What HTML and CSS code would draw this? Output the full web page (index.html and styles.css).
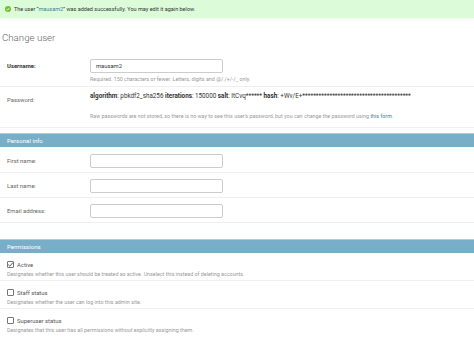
FILE: index.html
```html
<!DOCTYPE html>
<html>
<head>
<meta charset="utf-8">
<link rel="stylesheet" href="styles.css">
</head>
<body>
<div class="msg">
  <svg class="msg-icon" width="6" height="6" viewBox="0 0 12 12"><circle cx="6" cy="6" r="6" fill="#70bf2b"/><path d="M3.2 6.2 L5.2 8.1 L8.8 4.2" stroke="#fff" stroke-width="1.8" fill="none"/></svg>
  <span>The user “<a class="link">mausam2</a>” was added successfully. You may edit it again below.</span>
</div>
<h1 class="title">Change user</h1>
<div class="form">
  <div class="row row-user">
    <div class="label bold">Username:</div>
    <div class="field">
      <div class="input">mausam2</div>
      <div class="help">Required. 150 characters or fewer. Letters, digits and @/./+/-/_ only.</div>
    </div>
  </div>
  <div class="row row-pass">
    <div class="label">Password:</div>
    <div class="field">
      <div class="hashline"><b>algorithm</b>: pbkdf2_sha256 <b>iterations</b>: 150000 <b>salt</b>: ItCvq****** <b>hash</b>: +Wv/E+****************************************</div>
      <div class="help help-pass">Raw passwords are not stored, so there is no way to see this user’s password, but you can change the password using <a class="link">this form</a>.</div>
    </div>
  </div>
  <h2 class="header header-first">Personal info</h2>
  <div class="row row-text first">
    <div class="label">First name:</div>
    <div class="field"><div class="input"></div></div>
  </div>
  <div class="row row-text">
    <div class="label">Last name:</div>
    <div class="field"><div class="input"></div></div>
  </div>
  <div class="row row-text">
    <div class="label">Email address:</div>
    <div class="field"><div class="input"></div></div>
  </div>
  <h2 class="header header-perm">Permissions</h2>
  <div class="row row-check">
    <div class="checkline">
      <span class="box"><svg width="7" height="7" viewBox="0 0 7 7"><path d="M1.2 3.6 L2.8 5.2 L5.9 1.6" stroke="#444" stroke-width="0.9" fill="none"/></svg></span>
      <span class="checklabel">Active</span>
    </div>
    <div class="help">Designates whether this user should be treated as active. Unselect this instead of deleting accounts.</div>
  </div>
  <div class="row row-check">
    <div class="checkline">
      <span class="box"></span>
      <span class="checklabel">Staff status</span>
    </div>
    <div class="help">Designates whether the user can log into this admin site.</div>
  </div>
  <div class="row row-check last">
    <div class="checkline">
      <span class="box"></span>
      <span class="checklabel">Superuser status</span>
    </div>
    <div class="help">Designates that this user has all permissions without explicitly assigning them.</div>
  </div>
</div>
</body>
</html>
```

FILE: styles.css
```css
html, body {
  margin: 0;
  padding: 0;
  background: #fff;
}
body {
  width: 474px;
  height: 337px;
  overflow: hidden;
  font-family: Roboto, "Liberation Sans", sans-serif;
  color: #333;
}
.msg {
  height: 18px;
  background: #dbfbd9;
  display: flex;
  align-items: center;
  padding-left: 5px;
  gap: 3px;
  font-size: 5.5px;
  color: #333;
  box-shadow: 0 2px 3px #eefdee;
}
.msg-icon {
  flex: none;
}
.link {
  color: #447e9b;
}
.title {
  margin: 0;
  padding: 14px 0 0 2px;
  height: 18px;
  font-size: 9.7px;
  font-weight: 300;
  color: #666;
  line-height: 12px;
}
.form {
  display: flex;
  flex-direction: column;
}
.row {
  display: flex;
  align-items: flex-start;
  padding-left: 7px;
  border-bottom: 1px solid #eee;
  box-sizing: border-box;
}
.label {
  width: 83px;
  flex: none;
  font-size: 5.9px;
  color: #666;
}
.label.bold {
  font-weight: bold;
  color: #333;
}
.field {
  display: flex;
  flex-direction: column;
}
.input {
  width: 133px;
  height: 14px;
  box-sizing: border-box;
  border: 1px solid #ccc;
  border-radius: 2px;
  font-size: 5.8px;
  line-height: 12px;
  padding-left: 5px;
  color: #333;
}
.help {
  font-size: 5.35px;
  color: #999;
  line-height: 7px;
}
.row-user {
  height: 37px;
  padding-top: 9px;
}
.row-user .label {
  line-height: 14px;
}
.row-user .help {
  margin-top: 3px;
}
.row-pass {
  height: 41px;
  padding-top: 5px;
}
.row-pass .label {
  line-height: 14px;
  margin-top: 1px;
}
.hashline {
  font-size: 6.3px;
  line-height: 9px;
  color: #333;
  white-space: nowrap;
}
.help-pass {
  margin-top: 12px;
}
.header {
  margin: 0;
  height: 14px;
  background: #79aec8;
  color: #fff;
  font-size: 6.1px;
  font-weight: normal;
  line-height: 14px;
  padding-left: 7px;
  border-top: 1px solid #a9cde0;
  box-sizing: border-box;
}
.header-first {
  margin-top: 5px;
}
.header-perm {
  margin-top: 16px;
}
.row-text {
  height: 25px;
  padding-top: 6px;
  align-items: flex-start;
}
.row-text.first {
  height: 26px;
  padding-top: 7px;
}
.row-text .label {
  line-height: 14px;
}
.row-check {
  flex-direction: column;
  height: 28px;
  padding-top: 7px;
}
.row-check.last {
  border-bottom: none;
}
.checkline {
  display: flex;
  align-items: center;
  gap: 3px;
  height: 9px;
}
.box {
  width: 7px;
  height: 7px;
  box-sizing: border-box;
  border: 1px solid #767676;
  border-radius: 1px;
  display: flex;
  align-items: center;
  justify-content: center;
}
.box svg {
  flex: none;
}
.checklabel {
  font-size: 5.9px;
  color: #555;
}
.row-check .help {
  margin-top: 2px;
}
```
